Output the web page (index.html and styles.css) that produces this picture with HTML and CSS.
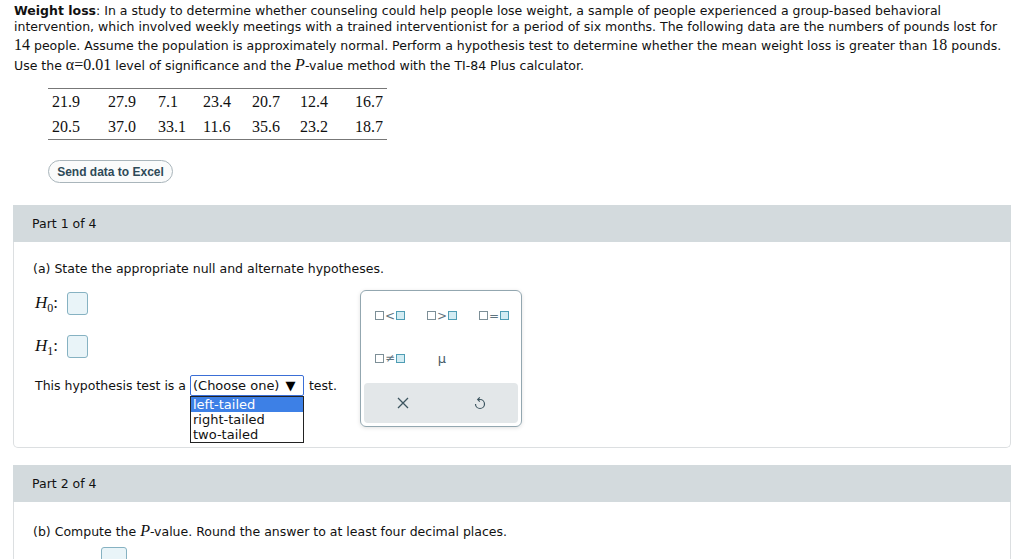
FILE: index.html
```html
<!DOCTYPE html>
<html lang="en">
<head>
<meta charset="utf-8">
<title>Weight loss</title>
<link rel="stylesheet" href="styles.css">
</head>
<body>
<div class="page">
  <div class="question">
    <div class="qline l1"><b>Weight loss</b>: In a study to determine whether counseling could help people lose weight, a sample of people experienced a group-based behavioral</div>
    <div class="qline l2">intervention, which involved weekly meetings with a trained interventionist for a period of six months. The following data are the numbers of pounds lost for</div>
    <div class="qline l3"><span class="m">14</span> people. Assume the population is approximately normal. Perform a hypothesis test to determine whether the mean weight loss is greater than <span class="m">18</span> pounds.</div>
    <div class="qline l4">Use the <span class="m">α=0.01</span> level of significance and the <span class="m"><i>P</i></span>-value method with the TI-84 Plus calculator.</div>
  </div>

  <div class="data">
    <div class="data-row"><span>21.9</span><span>27.9</span><span>7.1</span><span>23.4</span><span>20.7</span><span>12.4</span><span>16.7</span></div>
    <div class="data-row"><span>20.5</span><span>37.0</span><span>33.1</span><span>11.6</span><span>35.6</span><span>23.2</span><span>18.7</span></div>
  </div>

  <button class="excel" type="button">Send data to Excel</button>

  <section class="part">
    <div class="part-head">Part 1 of 4</div>
    <div class="part-body">
      <p class="prompt">(a) State the appropriate null and alternate hypotheses.</p>
      <div class="work">
        <div class="answers">
          <div class="hyp"><span class="hlabel"><i>H</i><sub>0</sub>:</span><span class="ansbox"></span></div>
          <div class="hyp h1"><span class="hlabel"><i>H</i><sub>1</sub>:</span><span class="ansbox"></span></div>
          <div class="sentence">This hypothesis test is a <span class="selectwrap"><span class="select">(Choose one)<span class="arrow">▼</span></span><span class="options"><span class="opt active">left-tailed</span><span class="opt">right-tailed</span><span class="opt">two-tailed</span></span></span> test.</div>
        </div>
        <div class="palette">
          <div class="syms">
            <span class="sym"><span class="sq"></span><span class="op">&lt;</span><span class="sq fill"></span></span>
            <span class="sym"><span class="sq"></span><span class="op">&gt;</span><span class="sq fill"></span></span>
            <span class="sym"><span class="sq"></span><span class="op">=</span><span class="sq fill"></span></span>
            <span class="sym"><span class="sq"></span><span class="op">≠</span><span class="sq fill"></span></span>
            <span class="sym mu">μ</span>
          </div>
          <div class="tools">
            <svg class="tool" width="14" height="14" viewBox="0 0 14 14"><path d="M2 2 L12 12 M12 2 L2 12" stroke="#3d5560" stroke-width="1.3" fill="none"/></svg>
            <svg class="tool" width="14" height="16" viewBox="0 0 14 16"><path d="M5 4.5 L7 4.5 A4.5 4.5 0 1 1 2.5 9" stroke="#3d5560" stroke-width="1.2" fill="none"/><path d="M6.8 2.4 L4.7 4.5 L6.8 6.6" stroke="#3d5560" stroke-width="1.2" fill="none"/></svg>
          </div>
        </div>
      </div>
    </div>
  </section>

  <section class="part part2">
    <div class="part-head">Part 2 of 4</div>
    <div class="part-body">
      <p class="prompt">(b) Compute the <span class="m"><i>P</i></span>-value. Round the answer to at least four decimal places.</p>
      <div class="pbox-row"><span class="ansbox wide"></span></div>
    </div>
  </section>
</div>
</body>
</html>
```

FILE: styles.css
```css
html, body {
  margin: 0;
  padding: 0;
  overflow: hidden;
  background: #fff;
}
body {
  font-family: "DejaVu Sans", Verdana, sans-serif;
  font-size: 12.5px;
  color: #111;
}
.page {
  width: 1024px;
}
.question {
  padding: 2px 0 0 14px;
}
.qline {
  white-space: nowrap;
  height: 16px;
  line-height: 17px;
}
.qline.l3 {
  height: 20px;
  line-height: 22px;
}
.qline.l4 {
  height: 20px;
  line-height: 22px;
}
.m {
  font-family: "Liberation Serif", "Times New Roman", serif;
  font-size: 16px;
}
.m i {
  font-size: 16px;
}

.data {
  margin: 14px 0 0 48px;
  width: 339px;
  border-top: 1px solid #777;
  border-bottom: 1px solid #777;
  font-family: "Liberation Serif", "Times New Roman", serif;
  font-size: 16px;
  color: #111;
}
.data-row {
  display: grid;
  grid-template-columns: 56px 50px 45px 49px 48px 55px 29px;
  padding-left: 4px;
  height: 25px;
  line-height: 26px;
}

.excel {
  display: block;
  margin: 20px 0 0 48px;
  width: 125px;
  height: 23px;
  padding: 0;
  border: 1px solid #a9b5bb;
  border-radius: 12px;
  background: #fafbfb;
  font-family: "Liberation Sans", Arial, sans-serif;
  font-weight: bold;
  font-size: 12px;
  color: #2e4a58;
}

.part {
  margin: 22px 0 0 13px;
  width: 996px;
  border: 1px solid #dcdfe1;
  border-top: none;
  border-radius: 0 0 5px 5px;
  padding-bottom: 20px;
}
.part-head {
  background: #d3dadd;
  height: 37px;
  line-height: 38px;
  padding-left: 19px;
  margin: 0 -1px;
}
.part-body {
  padding: 19px 0 0 19px;
}
.prompt {
  margin: 0;
  line-height: 16px;
  height: 16px;
}
.work {
  display: flex;
  margin-top: 13px;
}
.answers {
  width: 327px;
  padding-top: 1px;
}
.hyp {
  display: flex;
  align-items: center;
  height: 24px;
  padding-left: 2px;
}
.hyp.h1 {
  margin-top: 19px;
}
.hlabel {
  font-family: "Liberation Serif", "Times New Roman", serif;
  font-size: 17px;
  width: 32px;
}
.hlabel sub {
  font-size: 12px;
  vertical-align: -4px;
  line-height: 0;
}
.ansbox {
  display: inline-block;
  width: 19px;
  height: 21px;
  border: 1.5px solid #86b2c2;
  border-radius: 3px;
  background: #e9f4f8;
}
.sentence {
  margin-top: 17px;
  padding-left: 2px;
  height: 21px;
  line-height: 21px;
  white-space: nowrap;
}
.selectwrap {
  position: relative;
  display: inline-block;
  vertical-align: top;
  margin-right: 1px;
}
.select {
  display: inline-block;
  box-sizing: border-box;
  width: 114px;
  height: 21px;
  line-height: 20px;
  border: 1.5px solid #3b6fd6;
  border-radius: 2px;
  padding-left: 2px;
  font-size: 13px;
}
.arrow {
  font-size: 13px;
  margin-left: 6px;
  color: #000;
}
.options {
  position: absolute;
  left: 0;
  top: 21px;
  box-sizing: border-box;
  width: 114px;
  border: 1px solid #222;
  background: #fff;
  display: flex;
  flex-direction: column;
}
.opt {
  height: 15px;
  line-height: 15px;
  padding-left: 2px;
  font-size: 13px;
  color: #111;
}
.opt.active {
  background: #3d80e6;
  color: #fff;
}

.palette {
  box-sizing: border-box;
  width: 162px;
  height: 137px;
  border: 1px solid #93a7b0;
  border-radius: 6px;
  box-shadow: 0 1px 4px rgba(0, 0, 0, 0.12);
  padding: 3px;
  display: flex;
  flex-direction: column;
}
.syms {
  flex: 1;
  display: grid;
  grid-template-columns: 52px 52px 52px;
  grid-template-rows: 41px 44px;
  padding-top: 1px;
}
.sym {
  display: flex;
  align-items: center;
  justify-content: center;
  gap: 1px;
}
.sq {
  display: inline-block;
  width: 7px;
  height: 7px;
  border: 1.5px solid #7d8f97;
  background: #fff;
}
.sq.fill {
  background: #d3ecf3;
  border-color: #4f9db4;
}
.op {
  font-size: 12px;
  color: #5f7480;
  width: 10px;
  text-align: center;
  line-height: 10px;
}
.mu {
  font-size: 13px;
  color: #465b66;
}
.tools {
  height: 40px;
  background: #e3e7e9;
  border-radius: 4px;
  display: grid;
  grid-template-columns: 1fr 1fr;
  align-items: center;
  justify-items: center;
}

.part2 {
  margin-top: 17px;
}
.part2 .part-body {
  padding-top: 21px;
}
.pbox-row {
  padding: 8px 0 0 68px;
}
.ansbox.wide {
  width: 24px;
}
```
